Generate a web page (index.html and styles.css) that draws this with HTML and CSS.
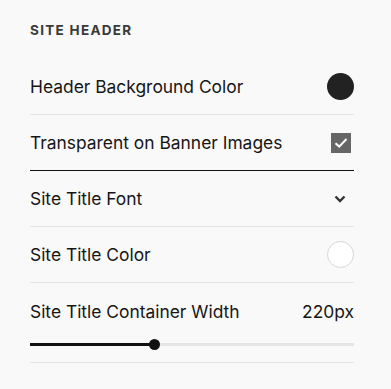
FILE: index.html
```html
<!DOCTYPE html>
<html lang="en">
<head>
    <meta charset="UTF-8">
    <meta name="viewport" content="width=device-width, initial-scale=1.0">
    <title>Site Header</title>
    <link rel="stylesheet" href="styles.css">
</head>
<body>
    <section class="panel">
        <h2 class="panel-title">Site Header</h2>
        <ul class="options">
            <li class="option">
                <span>Header Background Color</span>
                <span class="swatch swatch-dark"></span>
            </li>
            <li class="option option-strong">
                <span>Transparent on Banner Images</span>
                <span class="checkbox">
                    <svg width="14" height="12" viewBox="0 0 14 12"><path d="M1.5 6.2 L5.2 9.6 L12.5 2" fill="none" stroke="#fff" stroke-width="2"/></svg>
                </span>
            </li>
            <li class="option">
                <span>Site Title Font</span>
                <svg class="chevron" width="12" height="8" viewBox="0 0 12 8"><path d="M1.5 1.5 L6 6 L10.5 1.5" fill="none" stroke="#333" stroke-width="2.4"/></svg>
            </li>
            <li class="option">
                <span>Site Title Color</span>
                <span class="swatch swatch-light"></span>
            </li>
            <li class="option option-slider">
                <div class="slider-head">
                    <span>Site Title Container Width</span>
                    <span>220px</span>
                </div>
                <div class="slider">
                    <div class="slider-fill" style="width: 124px"></div>
                    <div class="slider-thumb"></div>
                </div>
            </li>
        </ul>
    </section>
</body>
</html>
```

FILE: styles.css
```css
body {
    margin: 0;
    background-color: #f9f9f9;
    font-family: Inter, "Noto Sans", sans-serif;
    color: #161616;
}

.panel {
    padding: 20px 37px 0 30px;
}

.panel-title {
    margin: 0;
    font-size: 13.5px;
    font-weight: 700;
    letter-spacing: 1.3px;
    text-transform: uppercase;
    color: #3a3a3a;
    line-height: 20px;
}

.options {
    list-style: none;
    margin: 19px 0 0 0;
    padding: 0;
}

.option {
    display: flex;
    justify-content: space-between;
    align-items: center;
    height: 55px;
    border-bottom: 1px solid #e3e3e3;
    font-size: 17.4px;
}

.option-strong {
    border-bottom-color: #111;
}

.swatch {
    width: 27px;
    height: 27px;
    border-radius: 50%;
    box-sizing: border-box;
}

.swatch-dark {
    background-color: #222;
}

.swatch-light {
    background-color: #fff;
    border: 1px solid #d6d6d6;
}

.checkbox {
    width: 20px;
    height: 20px;
    margin-right: 3px;
    background-color: #666;
    display: flex;
    align-items: center;
    justify-content: center;
}

.chevron {
    margin-right: 8px;
}

.option-slider {
    display: block;
    height: 79px;
}

.slider-head {
    display: flex;
    justify-content: space-between;
    padding-top: 18px;
    line-height: 22px;
}

.slider {
    position: relative;
    height: 3px;
    margin-top: 20px;
    background-color: #e5e5e5;
}

.slider-fill {
    height: 3px;
    background-color: #111;
}

.slider-thumb {
    position: absolute;
    left: 119px;
    top: -4px;
    width: 11px;
    height: 11px;
    border-radius: 50%;
    background-color: #111;
}
```
